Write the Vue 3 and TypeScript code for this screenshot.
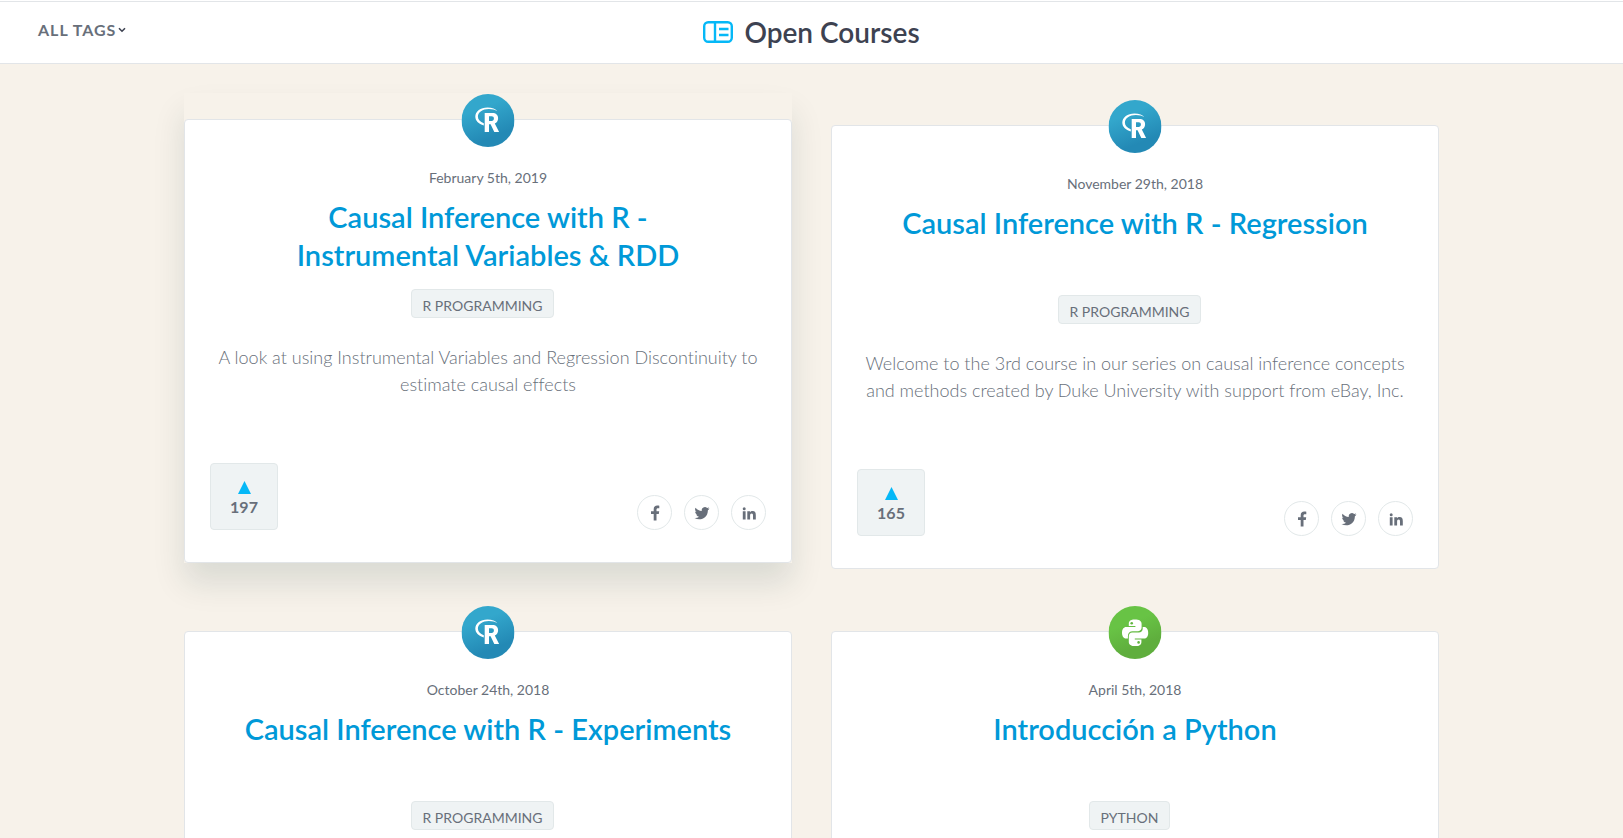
<script setup lang="ts">
interface Course {
  date: string
  title: string
  tag: string
  language: 'r' | 'python'
  description?: string
  votes?: number
  active?: boolean
}

const courses: Course[] = [
  {
    date: 'February 5th, 2019',
    title: 'Causal Inference with R - Instrumental Variables & RDD',
    tag: 'R Programming',
    language: 'r',
    description: 'A look at using Instrumental Variables and Regression Discontinuity to estimate causal effects',
    votes: 197,
    active: true,
  },
  {
    date: 'November 29th, 2018',
    title: 'Causal Inference with R - Regression',
    tag: 'R Programming',
    language: 'r',
    description: 'Welcome to the 3rd course in our series on causal inference concepts and methods created by Duke University with support from eBay, Inc.',
    votes: 165,
  },
  {
    date: 'October 24th, 2018',
    title: 'Causal Inference with R - Experiments',
    tag: 'R Programming',
    language: 'r',
  },
  {
    date: 'April 5th, 2018',
    title: 'Introducción a Python',
    tag: 'Python',
    language: 'python',
  },
]
</script>

<template>
  <div class="page">
    <header class="topbar">
      <button class="tags" type="button" aria-haspopup="listbox">
        All Tags
        <svg class="chevron" viewBox="0 0 8 6" aria-hidden="true">
          <path d="M1 1.200 4 4.200l3-3" fill="none" stroke="#3d4251" stroke-width="1.600" />
        </svg>
      </button>
      <h1 class="heading">
        <svg class="book" viewBox="0 0 30 22" aria-hidden="true" fill="none" stroke="#05b8f7" stroke-width="2.400">
          <rect x="1.200" y="1.200" width="27.600" height="19.600" rx="4" />
          <path d="M12 1v20M16 8h9.500M16 14h9.500" />
        </svg>
        <span>Open Courses</span>
      </h1>
    </header>

    <main class="courses">
      <article v-for="course in courses" :key="course.title" class="course" :class="{ active: course.active }">
        <svg v-if="course.language === 'r'" class="badge" viewBox="0 0 53 53" aria-hidden="true">
          <defs>
            <linearGradient id="blue" x1="0.3" y1="0" x2="0.7" y2="1">
              <stop offset="0.25" stop-color="#33a7cc" />
              <stop offset="0.8" stop-color="#2389b5" />
            </linearGradient>
          </defs>
          <circle cx="26.500" cy="26.500" r="26.500" fill="url(#blue)" />
          <path fill="#fff" fill-rule="evenodd" d="M22.300 31.500C17 30.200 13.800 26.800 13.800 22.600 13.800 17.200 19 13.400 26 13.400c4.600 0 8.300 1.500 10 3.900-2.300-1.500-5.400-2.300-8.600-2.300-6.400 0-11 3.200-11 7.500 0 3 2.300 5.500 5.900 6.700z" />
          <path fill="#fff" fill-rule="evenodd" d="M23.200 19h7.600c3.800 0 5.800 2 5.800 5.300 0 2.600-1.200 4.400-3.300 5.200L37.600 38h-4.800l-3.700-7.800h-1.600V38h-4.300zM27.500 22.300v4.800h2.600c1.500 0 2.300-.9 2.300-2.500 0-1.500-.8-2.300-2.300-2.300z" />
        </svg>
        <svg v-else class="badge" viewBox="0 0 53 53" aria-hidden="true">
          <defs>
            <linearGradient id="green" x1="0.3" y1="0" x2="0.7" y2="1">
              <stop offset="0.3" stop-color="#68c345" />
              <stop offset="0.75" stop-color="#5fae3d" />
            </linearGradient>
          </defs>
          <circle cx="26.500" cy="26.500" r="26.500" fill="url(#green)" />
          <g transform="translate(13.500 13.500)">
            <path fill="#fff" d="M12.800 0C8.500 0 6.800 1.600 6.800 4.200V6.600h6.600v.9H4.200C1.600 7.500 0 9.800 0 13.200S1.500 19 4 19h1.900v-2.600c0-2.700 2-4.700 4.700-4.700h5.600c2 0 3.400-1.600 3.400-3.600V4.200C19.600 1.500 17.200 0 12.800 0z" />
            <path fill="#fff" d="M13.400 26.600c4.300 0 6-1.600 6-4.200V20h-6.600v-.9H22c2.600 0 4.200-2.300 4.200-5.700S24.700 7.600 22.200 7.600H20.700v1.600c0 2.300-1.600 3.700-4 3.700H10.300c-2.100 0-3.500 1.600-3.500 3.600v5.900c0 2.700 2.200 4.200 6.600 4.200z" />
            <circle cx="9.700" cy="3.700" r="1.300" fill="#62b640" />
            <circle cx="16.600" cy="22.900" r="1.300" fill="#62b640" />
          </g>
        </svg>

        <div class="card">
          <time class="date">{{ course.date }}</time>
          <h2 class="title"><a href="#">{{ course.title }}</a></h2>
          <ul class="labels">
            <li><a href="#" class="label">{{ course.tag }}</a></li>
          </ul>
          <p v-if="course.description" class="description">{{ course.description }}</p>
          <footer v-if="course.votes !== undefined" class="actions">
            <button class="vote" type="button" :aria-label="`Upvote, ${course.votes} votes`">
              <svg class="arrow" viewBox="0 0 13 13" aria-hidden="true"><path d="M6.500 0 13 13H0z" fill="#05b8f7" /></svg>
              <span>{{ course.votes }}</span>
            </button>
            <div class="share">
              <a href="#" class="social" aria-label="Facebook">
                <svg viewBox="0 0 16 16"><path d="M9.500 15.500V8.900h2.300l.4-2.700H9.500V4.700c0-.8.300-1.400 1.500-1.400h1.300V.8C12 .7 11.200.6 10.300.6 8.100.6 6.700 1.900 6.700 4.300v1.900H4v2.700h2.700v6.600z" /></svg>
              </a>
              <a href="#" class="social" aria-label="Twitter">
                <svg viewBox="0 0 16 16"><path d="M15.500 3.500c-.6.3-1.200.4-1.800.5.700-.4 1.100-1 1.400-1.700-.6.400-1.300.6-2 .8a3.100 3.100 0 0 0-5.300 2.800C5.200 5.800 3 4.600 1.500 2.700c-.8 1.400-.4 3.200 1 4.100-.5 0-1-.1-1.400-.4 0 1.500 1 2.800 2.500 3.100-.5.100-.9.100-1.400.1.400 1.200 1.600 2.100 2.900 2.100A6.200 6.200 0 0 1 .5 13c5.500 3.300 13.400.4 13.400-7.700.7-.5 1.200-1.100 1.600-1.800z" /></svg>
              </a>
              <a href="#" class="social" aria-label="LinkedIn">
                <svg viewBox="0 0 16 16"><path d="M1.800 6.200h2.800v8.300H1.800zM3.200 2.200a1.500 1.500 0 1 1 0 3 1.500 1.500 0 0 1 0-3zM6.300 6.200H9v1.100c.5-.8 1.400-1.300 2.600-1.300 2.400 0 3.200 1.500 3.200 3.900v4.600H12v-4.100c0-1.100-.2-2-1.400-2-1.100 0-1.500.8-1.500 2v4.100H6.300z" /></svg>
              </a>
            </div>
          </footer>
        </div>
      </article>
    </main>
  </div>
</template>

<style>
html {
  scrollbar-width: none;
}
</style>

<style scoped>
.page {
  min-height: 100vh;
  background: #f7f2ea;
  color: #686f7a;
  font-family: Lato, sans-serif;
  font-variant-ligatures: none;
}

.page::before {
  content: '';
  display: block;
  height: 1px;
  background: #fff;
}

.topbar {
  display: grid;
  grid-template-columns: 1fr auto 1fr;
  align-items: center;
  box-sizing: border-box;
  height: 63px;
  padding: 0 38px 2px;
  border-top: 1px solid #e2e5e8;
  border-bottom: 1px solid #e2e5e8;
  background: #fff;
}

.tags {
  justify-self: start;
  display: flex;
  align-items: center;
  gap: 2px;
  padding: 0 0 4px;
  border: 0;
  background: none;
  color: #686f7a;
  font: 700 16px/20px Lato, sans-serif;
  letter-spacing: 1px;
  text-transform: uppercase;
}

.chevron {
  width: 8px;
  height: 6px;
}

.heading {
  display: flex;
  align-items: center;
  gap: 11px;
  margin: 0;
  color: #3d4251;
  font-size: 28px;
  font-weight: 600;
  line-height: 36px;
}

.book {
  flex: none;
  width: 30px;
  height: 22px;
}

.courses {
  display: grid;
  grid-template-columns: repeat(2, minmax(0, 1fr));
  gap: 36px 39px;
  max-width: 1255px;
  margin: 0 auto;
  padding: 35px 20px;
}

.course {
  position: relative;
  padding-top: 26px;
}

.course.active {
  transform: translateY(-6px);
  box-shadow: 0 20px 30px rgba(20, 50, 50, 0.12);
}

.badge {
  position: absolute;
  top: 1px;
  left: 50%;
  width: 53px;
  height: 53px;
  transform: translateX(-50%);
}

.card {
  display: flex;
  flex-direction: column;
  min-height: 444px;
  box-sizing: border-box;
  padding: 48px 25px 32px;
  border: 1px solid #e2e5e8;
  border-radius: 4px;
  background: #fff;
  text-align: center;
}

.date {
  font-size: 14px;
  line-height: 20px;
}

.title {
  height: 76px;
  margin: 10px 24px 0;
  font-size: 29px;
  font-weight: 600;
  line-height: 38px;
  text-wrap: balance;
}

.title a {
  color: #0099d8;
  text-decoration: none;
}

.labels {
  display: flex;
  justify-content: center;
  margin: 15px 0 0;
  padding: 0;
  list-style: none;
}

.label {
  display: block;
  margin-right: 11px;
  padding: 6px 11px 1px;
  border: 1px solid #e2e8e9;
  border-radius: 4px;
  background: #eff3f4;
  color: #686f7a;
  font-size: 14px;
  line-height: 20px;
  text-decoration: none;
  text-transform: uppercase;
}

.description {
  margin: 26px 0 0;
  font-size: 18px;
  font-weight: 300;
  line-height: 27px;
}

.actions {
  display: flex;
  align-items: flex-end;
  justify-content: space-between;
  margin-top: auto;
}

.vote {
  display: flex;
  flex-direction: column;
  align-items: center;
  gap: 2px;
  min-width: 68px;
  padding: 17px 10px 11px;
  border: 1px solid #e2e8e9;
  border-radius: 4px;
  background: #eff3f4;
  color: #686f7a;
  font: 700 16px/22px Lato, sans-serif;
}

.arrow {
  width: 13px;
  height: 13px;
}

.share {
  display: flex;
  gap: 12px;
}

.social {
  display: flex;
  align-items: center;
  justify-content: center;
  width: 33px;
  height: 33px;
  border: 1px solid #e2e8e9;
  border-radius: 50%;
}

.social svg {
  width: 16px;
  height: 16px;
  fill: #686f7a;
}
</style>
